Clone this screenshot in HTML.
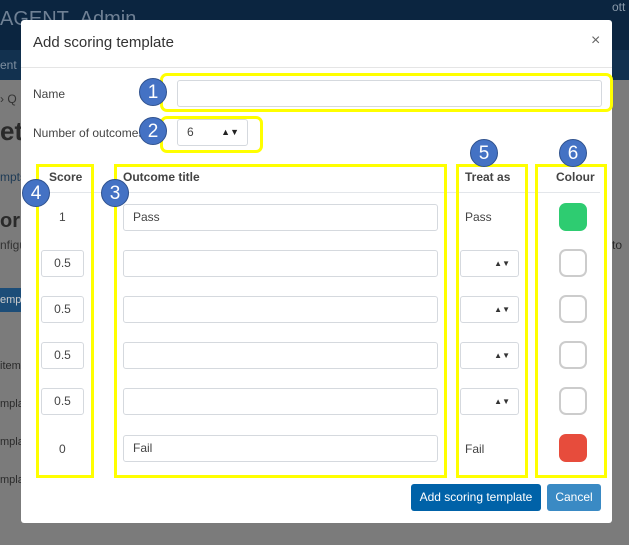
<html><head><style>
body{margin:0;width:629px;height:545px;position:relative;overflow:hidden;font-family:"Liberation Sans",sans-serif;background:#7b7b7b}
.a{position:absolute}
.inp{position:absolute;background:#fff;border:1px solid #d5d9de;border-radius:3px;box-sizing:border-box;font-size:12px;color:#444;line-height:25px}
.y{position:absolute;border:3px solid #ffff00;box-sizing:border-box}
.c{position:absolute;width:28px;height:28px;border-radius:50%;background:#4472c4;color:#fff;font-size:19px;text-align:center;line-height:28px;border:1px solid #2f528f;box-sizing:border-box}
.t{position:absolute;font-size:12px;color:#444}
.arr{position:absolute;right:8px;top:0;font-size:8px;color:#333;line-height:25px}
.sw{position:absolute;width:28px;height:28px;border-radius:7px;box-sizing:border-box;border:2px solid #ccc;background:#fff;left:559px}
</style></head><body>
<div class="a" style="left:0;top:0;width:629px;height:50px;background:#0b2540"></div>
<div class="a" style="left:0;top:50px;width:629px;height:30px;background:#12314f"></div>
<div class="a" style="left:0;top:8px;color:#6f8094;font-size:20px">AGENT &nbsp;Admin</div>
<div class="a" style="left:0;top:58px;color:#7f8fa0;font-size:12px">ent</div>
<div class="a" style="left:0;top:92px;color:#333;font-size:12px">› Q</div>
<div class="a" style="left:0;top:116px;color:#2a2a2a;font-size:26px;font-weight:bold">et</div>
<div class="a" style="left:0;top:170px;color:#1d3a55;font-size:12px">mpts</div>
<div class="a" style="left:0;top:210px;color:#2a2a2a;font-size:20px;font-weight:bold">ori</div>
<div class="a" style="left:0;top:238px;color:#333;font-size:12px">nfigure</div>
<div class="a" style="left:0;top:288px;width:21px;height:24px;background:#1c4d78;color:#ccc;font-size:11px;line-height:24px">emp</div>
<div class="a" style="left:0;top:360px;color:#2a2a2a;font-size:11px">item</div>
<div class="a" style="left:0;top:398px;color:#2a2a2a;font-size:11px">mpla</div>
<div class="a" style="left:0;top:436px;color:#2a2a2a;font-size:11px">mpla</div>
<div class="a" style="left:0;top:474px;color:#2a2a2a;font-size:11px">mpla</div>
<div class="a" style="left:612px;top:238px;color:#2a2a2a;font-size:12px">to</div>
<div class="a" style="left:612px;top:0;color:#8a9aaa;font-size:12px">ott</div>

<div class="a" style="left:21px;top:20px;width:591px;height:503px;background:#fff;border-radius:3px"></div>
<div class="a" style="left:33px;top:34px;font-size:15px;color:#333">Add scoring template</div>
<div class="a" style="left:591px;top:32px;font-size:16px;color:#666">×</div>
<div class="a" style="left:21px;top:67px;width:591px;height:1px;background:#e5e5e5"></div>
<div class="t" style="left:33px;top:87px">Name</div>
<div class="t" style="left:33px;top:126px">Number of outcomes</div>
<div class="inp" style="left:177px;top:80px;width:425px;height:27px"></div>
<div class="inp" style="left:177px;top:119px;width:71px;height:27px;padding-left:9px">6<span class="arr" style="font-size:9px;color:#222">▲▼</span></div>

<div class="t" style="left:49px;top:170px;font-weight:bold">Score</div>
<div class="t" style="left:123px;top:170px;font-weight:bold">Outcome title</div>
<div class="t" style="left:465px;top:170px;font-weight:bold">Treat as</div>
<div class="t" style="left:556px;top:170px;font-weight:bold">Colour</div>
<div class="a" style="left:36px;top:192px;width:564px;height:1px;background:#e3e6ea"></div>

<div class="t" style="left:59px;top:210px">1</div>
<div class="inp" style="left:123px;top:204px;width:315px;height:27px;padding-left:9px">Pass</div>
<div class="t" style="left:465px;top:210px">Pass</div>
<div class="sw" style="top:203px;background:#2ecc71;border:none"></div>

<div class="inp" style="left:41px;top:250px;width:43px;height:27px;text-align:center">0.5</div>
<div class="inp" style="left:123px;top:250px;width:315px;height:27px"></div>
<div class="inp" style="left:460px;top:250px;width:59px;height:27px"><span class="arr">▲▼</span></div>
<div class="sw" style="top:249px"></div>

<div class="inp" style="left:41px;top:296px;width:43px;height:27px;text-align:center">0.5</div>
<div class="inp" style="left:123px;top:296px;width:315px;height:27px"></div>
<div class="inp" style="left:460px;top:296px;width:59px;height:27px"><span class="arr">▲▼</span></div>
<div class="sw" style="top:295px"></div>

<div class="inp" style="left:41px;top:342px;width:43px;height:27px;text-align:center">0.5</div>
<div class="inp" style="left:123px;top:342px;width:315px;height:27px"></div>
<div class="inp" style="left:460px;top:342px;width:59px;height:27px"><span class="arr">▲▼</span></div>
<div class="sw" style="top:341px"></div>

<div class="inp" style="left:41px;top:388px;width:43px;height:27px;text-align:center">0.5</div>
<div class="inp" style="left:123px;top:388px;width:315px;height:27px"></div>
<div class="inp" style="left:460px;top:388px;width:59px;height:27px"><span class="arr">▲▼</span></div>
<div class="sw" style="top:387px"></div>

<div class="t" style="left:59px;top:442px">0</div>
<div class="inp" style="left:123px;top:435px;width:315px;height:27px;padding-left:9px">Fail</div>
<div class="t" style="left:465px;top:442px">Fail</div>
<div class="sw" style="top:434px;background:#e74c3c;border:none"></div>

<div class="a" style="left:411px;top:484px;width:130px;height:27px;background:#0062a8;border-radius:3px;color:#fff;font-size:12px;text-align:center;line-height:27px">Add scoring template</div>
<div class="a" style="left:547px;top:484px;width:54px;height:27px;background:#3a8ac4;border-radius:3px;color:#fff;font-size:12px;text-align:center;line-height:27px">Cancel</div>

<div class="y" style="left:160px;top:73px;width:453px;height:39px;border-radius:7px"></div>
<div class="y" style="left:160px;top:116px;width:103px;height:37px;border-radius:7px"></div>
<div class="y" style="left:36px;top:164px;width:58px;height:314px"></div>
<div class="y" style="left:114px;top:164px;width:333px;height:314px"></div>
<div class="y" style="left:456px;top:164px;width:72px;height:314px"></div>
<div class="y" style="left:535px;top:164px;width:72px;height:314px"></div>
<div class="c" style="left:139px;top:78px">1</div>
<div class="c" style="left:139px;top:117px">2</div>
<div class="c" style="left:101px;top:179px">3</div>
<div class="c" style="left:22px;top:179px">4</div>
<div class="c" style="left:470px;top:139px">5</div>
<div class="c" style="left:559px;top:139px">6</div>
</body></html>
